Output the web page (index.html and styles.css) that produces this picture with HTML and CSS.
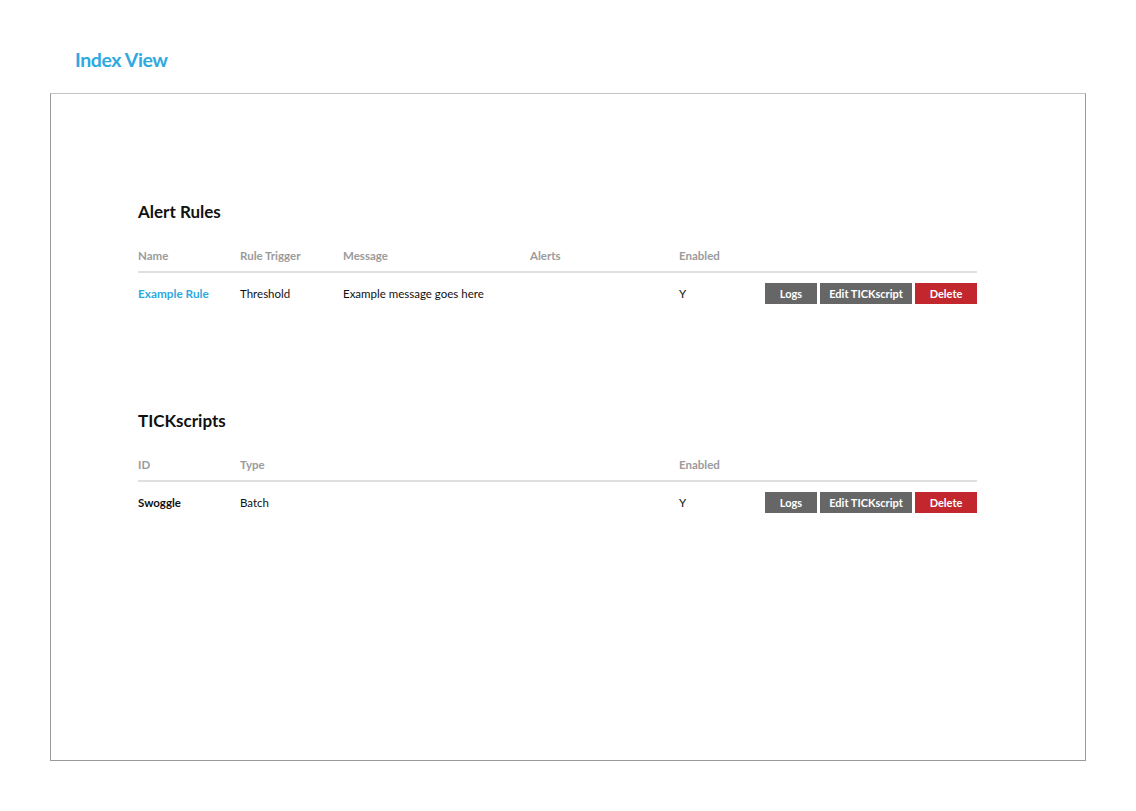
FILE: index.html
```html
<!DOCTYPE html>
<html>
<head>
<meta charset="utf-8">
<link rel="stylesheet" href="styles.css">
</head>
<body>
<div class="page">
  <h1 class="page-title">Index View</h1>
  <div class="frame">
    <section class="section">
      <h2 class="section-title">Alert Rules</h2>
      <div class="table">
        <div class="row head">
          <div>Name</div>
          <div>Rule Trigger</div>
          <div>Message</div>
          <div>Alerts</div>
          <div>Enabled</div>
          <div></div>
        </div>
        <div class="row data">
          <div class="link">Example Rule</div>
          <div>Threshold</div>
          <div>Example message goes here</div>
          <div></div>
          <div>Y</div>
          <div class="actions">
            <span class="btn">Logs</span>
            <span class="btn">Edit TICKscript</span>
            <span class="btn danger">Delete</span>
          </div>
        </div>
      </div>
    </section>
    <section class="section second">
      <h2 class="section-title">TICKscripts</h2>
      <div class="table">
        <div class="row head">
          <div>ID</div>
          <div class="span3">Type</div>
          <div>Enabled</div>
          <div></div>
        </div>
        <div class="row data">
          <div class="strong">Swoggle</div>
          <div class="span3">Batch</div>
          <div>Y</div>
          <div class="actions">
            <span class="btn">Logs</span>
            <span class="btn">Edit TICKscript</span>
            <span class="btn danger">Delete</span>
          </div>
        </div>
      </div>
    </section>
  </div>
</div>
</body>
</html>
```
FILE: styles.css
```css
html, body {
  margin: 0;
  padding: 0;
  background: #fff;
}
body {
  font-family: Lato, "Open Sans", "Liberation Sans", sans-serif;
  color: #111;
}
.page {
  padding: 48px 50px 0 50px;
}
.page-title {
  margin: 0 0 21px 25px;
  font-size: 19.5px;
  line-height: 24px;
  letter-spacing: -0.4px;
  font-weight: 700;
  color: #2ea9df;
}
.frame {
  box-sizing: border-box;
  width: 1036px;
  height: 668px;
  border: 1px solid #9a9a9a;
  border-top-color: #c4c4c4;
  padding: 108px 0 0 87px;
}
.section {
  width: 839px;
}
.section.second {
  margin-top: 107px;
}
.section-title {
  margin: 0 0 26px 0;
  font-size: 17px;
  line-height: 20px;
  font-weight: 700;
  color: #111;
}
.row {
  display: grid;
  grid-template-columns: 102px 103px 187px 149px 86px 1fr;
  align-items: center;
}
.span3 {
  grid-column: span 3;
}
.row.head {
  font-size: 11.5px;
  line-height: 16px;
  font-weight: 700;
  color: #9b9b9b;
  padding-bottom: 7px;
  border-bottom: 2px solid #e0e0e0;
}
.row.data {
  font-size: 11.5px;
  padding-top: 10px;
  min-height: 21px;
}
.link {
  color: #2ea9df;
  font-weight: 700;
  font-size: 11.8px;
}
.strong {
  font-weight: 700;
}
.actions {
  display: flex;
  justify-content: flex-end;
  gap: 3px;
}
.btn {
  display: flex;
  align-items: center;
  justify-content: center;
  height: 21px;
  background: #666666;
  color: #fff;
  font-size: 11px;
  font-weight: 700;
}
.btn:nth-child(1) { width: 52px; }
.btn:nth-child(2) { width: 92px; }
.btn:nth-child(3) { width: 62px; }
.btn.danger {
  background: #c1272d;
}
```
